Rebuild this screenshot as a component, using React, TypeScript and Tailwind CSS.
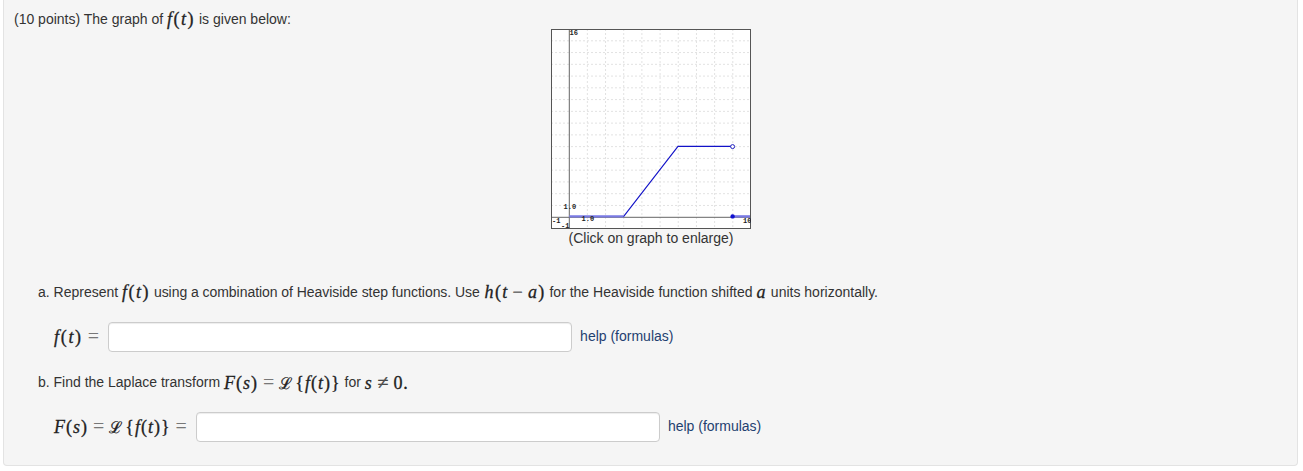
import React from "react";

const M = ({ children, className = "tracking-[1.5px]" }: { children: React.ReactNode; className?: string }) => (
  <span className={`font-['Liberation_Serif',serif] text-[18px] leading-none text-[#222] [-webkit-text-stroke:0.3px_#222] ${className}`}>
    {children}
  </span>
);
const I = ({ children }: { children: React.ReactNode }) => <i className="italic">{children}</i>;
const Eq = () => <span className="mx-[5px] text-[20px] tracking-normal text-[#777] [-webkit-text-stroke:0px]">=</span>;
const Lap = () => (
  <span className="font-['DejaVu_Serif',serif] text-[16px] tracking-normal">ℒ</span>
);

const Help = () => (
  <a className="mb-[2px] ml-2 text-[14px] text-[#1f3f70]">help (formulas)</a>
);

const Field = () => (
  <span className="block h-[30px] w-[464px] rounded-[4px] border border-[#ccc] bg-white shadow-[inset_0_1px_1px_rgba(0,0,0,0.075)]" />
);

const xs = Array.from({ length: 10 }, (_, k) => 18.18 * (k + 2));
const ys = Array.from({ length: 15 }, (_, k) => 188.2 - 11.76 * (k + 1));

function Graph() {
  const lab = "font-['Liberation_Mono',monospace] text-[7px] font-bold fill-[#222]";
  return (
    <svg width="200" height="200" viewBox="0 0 200 200" className="block bg-white">
      {xs.map((x) => (
        <line key={x} x1={x} x2={x} y1="0" y2="200" stroke="#e2e2e2" strokeDasharray="2 2" />
      ))}
      {ys.map((y) => (
        <line key={y} x1="0" x2="200" y1={y} y2={y} stroke="#e2e2e2" strokeDasharray="2 2" />
      ))}
      <line x1="18.3" x2="18.3" y1="0" y2="200" stroke="#666" />
      <line x1="0" x2="200" y1="188.3" y2="188.3" stroke="#666" />
      <line x1="18.3" x2="72.5" y1="187.4" y2="187.4" stroke="#7a7ae4" strokeWidth="2.4" />
      <line x1="181.6" x2="200" y1="187.4" y2="187.4" stroke="#7a7ae4" strokeWidth="2.4" />
      <polyline points="72.5,187.6 127,117.4 181,117.4" fill="none" stroke="#1212c8" strokeWidth="1.1" />
      <circle cx="181.6" cy="117.6" r="2" fill="white" stroke="#2020c0" />
      <circle cx="181.6" cy="187.4" r="2.2" fill="#1010d0" />
      <rect x="0.5" y="0.5" width="199" height="199" fill="none" stroke="#555" />
      <text x="18.5" y="6" className={lab}>16</text>
      <text x="12.5" y="179.5" className={lab}>1.0</text>
      <text x="30.5" y="191.5" className={lab}>1.0</text>
      <text x="1" y="194" className={lab}>-1</text>
      <text x="10" y="199" className={lab}>-1</text>
      <text x="192" y="194" className={lab}>10</text>
    </svg>
  );
}

export default function App() {
  return (
    <div className="h-[471px] w-[1303px] bg-white font-['Liberation_Sans',sans-serif] text-[14px] leading-[20px] text-[#333]">
      <div className="ml-[3px] h-[466px] w-[1295px] rounded-b-[4px] border border-t-0 border-[#e3e3e3] bg-[#f5f5f5] pl-[10px] pt-[9px]">
        <div className="flex h-[20px] items-center">
          (10 points) The graph of&nbsp;
          <M>
            <I>f</I>(<I>t</I>)
          </M>
          &nbsp;is given below:
        </div>
        <div className="flex flex-col items-center pr-[9px]">
          <Graph />
          <div className="-mt-[1px] text-center">(Click on graph to enlarge)</div>
        </div>
        <div className="ml-[24px] mt-[34px]">
          <div className="flex h-[20px] items-center whitespace-pre">
            {"a. Represent "}
            <M>
              <I>f</I>(<I>t</I>)
            </M>
            <span className="tracking-[-0.05px]">{" using a combination of Heaviside step functions. Use "}</span>
            <M className="ml-[1px] tracking-[1.3px]">
              <I>h</I>(<I>t</I>
              <span className="mx-[4px] text-[#777]">−</span>
              <I>a</I>)
            </M>
            {" for the Heaviside function shifted "}
            <M>
              <I>a</I>
            </M>
            {" units horizontally."}
          </div>
          <div className="mt-[20px] flex items-center pl-[16px]">
            <M className="mb-[3px] mr-[4px] tracking-[1.7px]">
              <I>f</I>(<I>t</I>)
              <Eq />
            </M>
            <Field />
            <Help />
          </div>
          <div className="mt-[20px] flex h-[20px] items-center whitespace-pre">
            {"b. Find the Laplace transform "}
            <M className="tracking-[1px]">
              <I>F</I>(<I>s</I>)
              <Eq />
              <Lap />
              <span className="ml-[3px]">{"{"}</span>
              <I>f</I>(<I>t</I>){"}"}
            </M>
            {" for "}
            <M className="tracking-[0.6px]">
              <I>s</I> <span className="text-[20px] tracking-normal text-[#555]">≠</span> 0.
            </M>
          </div>
          <div className="mt-[20px] flex items-center pl-[16px]">
            <M className="mb-[3px] mr-[4px] tracking-[1px]">
              <I>F</I>(<I>s</I>)
              <Eq />
              <Lap />
              <span className="ml-[3px]">{"{"}</span>
              <I>f</I>(<I>t</I>){"}"}
              <Eq />
            </M>
            <Field />
            <Help />
          </div>
        </div>
      </div>
    </div>
  );
}
